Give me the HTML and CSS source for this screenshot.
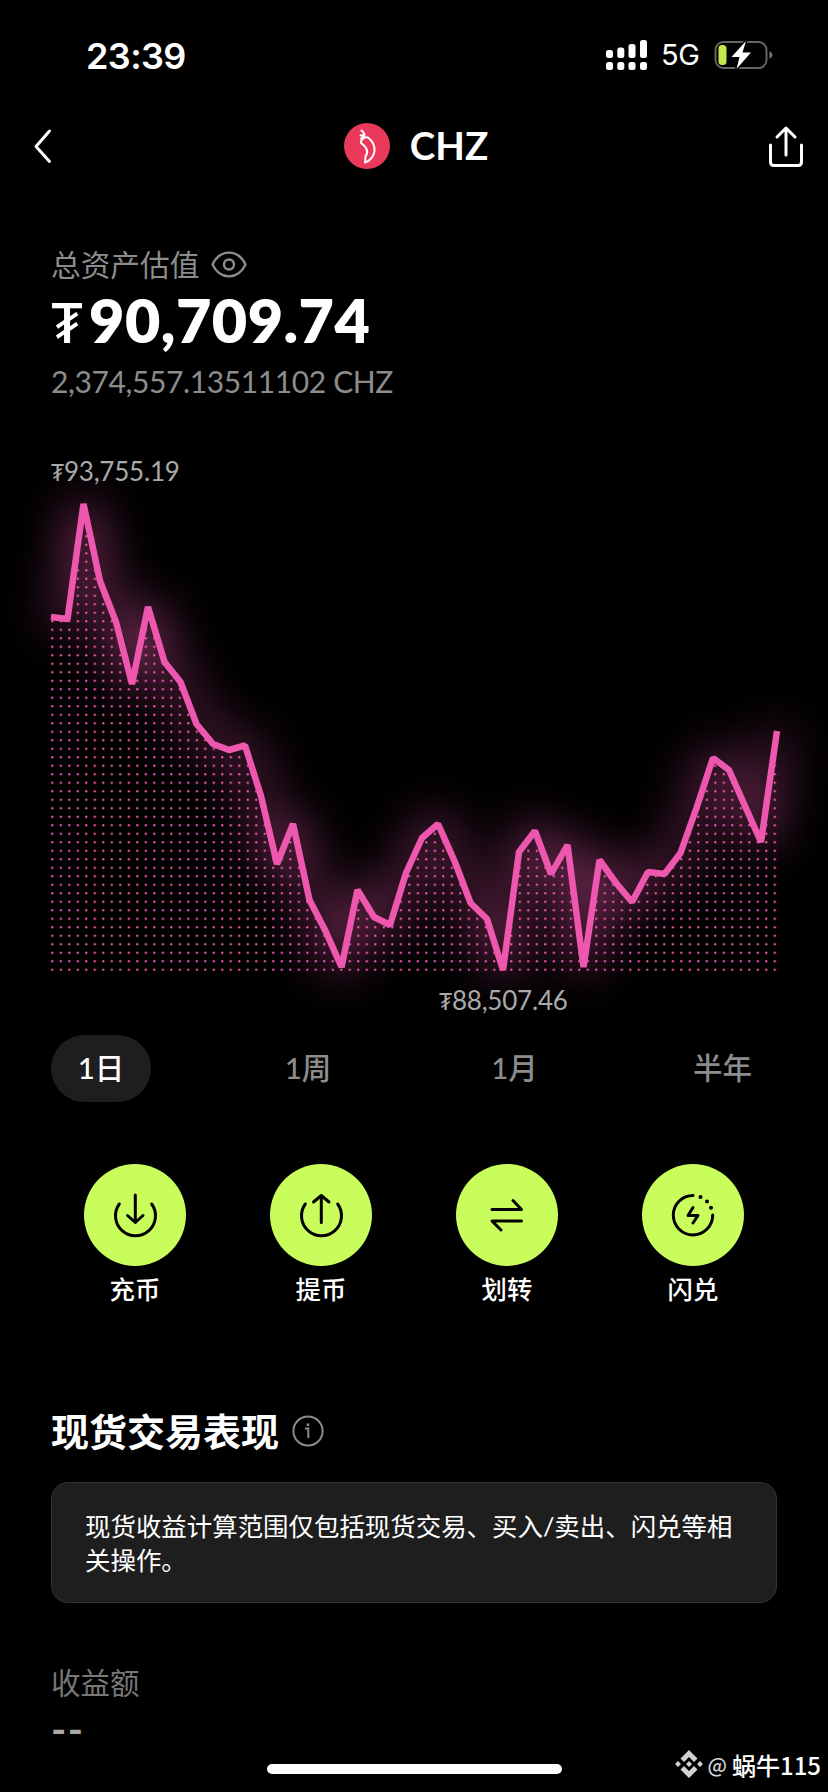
FILE: index.html
```html
<!DOCTYPE html>
<html lang="zh-CN">
<head>
    <meta charset="UTF-8">
    <meta name="viewport" content="width=device-width, initial-scale=1.0">
    <title>CHZ</title>
    <link rel="stylesheet" href="styles.css">
</head>
<body>
    <div class="status-bar">
        <span class="time">23:39</span>
        <div class="status-icons">
            <svg class="signal" width="42" height="30" viewBox="0 0 42 30" fill="#fff">
                <rect x="0" y="10" width="7" height="8" rx="2.5"/>
                <rect x="11.3" y="7.5" width="7" height="10.5" rx="2.5"/>
                <rect x="22.5" y="4" width="7" height="14" rx="2.5"/>
                <rect x="34" y="0" width="7" height="18" rx="2.5"/>
                <rect x="0" y="22" width="7" height="8" rx="2.5"/>
                <rect x="11.3" y="22" width="7" height="8" rx="2.5"/>
                <rect x="22.5" y="22" width="7" height="8" rx="2.5"/>
                <rect x="34" y="22" width="7" height="8" rx="2.5"/>
            </svg>
            <span class="network">5G</span>
            <svg class="battery" width="60" height="30" viewBox="0 0 60 30">
                <rect x="1.5" y="2" width="51" height="26" rx="8" fill="none" stroke="#646464" stroke-width="2"/>
                <path d="M55.5 11 Q58.5 13 58.5 15 Q58.5 17 55.5 19 Z" fill="#777"/>
                <rect x="4.5" y="5" width="8" height="20" rx="3.5" fill="#c3e84e"/>
                <path d="M32 1 L17.5 17 H25.5 L22.5 29 L37 12.5 H28.5 Z" fill="#fff" stroke="#000" stroke-width="3" paint-order="stroke"/>
            </svg>
        </div>
    </div>

    <header class="nav">
        <svg width="20" height="36" viewBox="0 0 20 36" fill="none" stroke="#fff" stroke-width="3" stroke-linecap="round" stroke-linejoin="round">
            <path d="M16.5 3 L3 18.5 L16.5 33.5"/>
        </svg>
        <div class="coin">
            <svg width="46" height="46" viewBox="0 0 46 46">
                <circle cx="23" cy="23" r="23" fill="#ea3a5c"/>
                <g fill="none" stroke="#fff" stroke-width="2" stroke-linecap="round" stroke-linejoin="round">
                    <path d="M17.5 7.5 L19.5 9.5 L20.5 12 M16.5 12.5 L20.5 12 M17 15.5 L20 13.5"/>
                    <path d="M17 18 C19 14.5 22 14 24 14.5 C28.5 18 31 23 30.5 28 C30 33 26 38 21 39.5 L21.5 33.5 C24 30 24 25 17 20 Z"/>
                </g>
            </svg>
            <h1>CHZ</h1>
        </div>
        <svg class="share" width="38" height="42" viewBox="0 0 38 42" fill="none" stroke="#fff" stroke-width="3" stroke-linecap="round" stroke-linejoin="round">
            <path d="M2.5 20 V37 Q2.5 40.5 6 40.5 H30 Q33.5 40.5 33.5 37 V20"/>
            <path d="M18 30 V3 M9 12 L18 3 L27 12"/>
        </svg>
    </header>

    <main>
        <section class="summary">
            <div class="label">
                <span>总资产估值</span>
                <svg width="36" height="28" viewBox="0 0 36 28" fill="none" stroke="#8c8c8c" stroke-width="2.4" stroke-linejoin="round">
                    <path d="M1.5 14.5 C9 -1.3 27 -1.3 34.5 14.5 C27 30.3 9 30.3 1.5 14.5 Z"/>
                    <circle cx="18" cy="14.5" r="5"/>
                </svg>
            </div>
            <p class="total"><span class="sign">₮</span>90,709.74</p>
            <p class="amount">2,374,557.13511102 CHZ</p>
        </section>

        <section class="chart">
            <p class="limit high"><span class="sign">₮</span>93,755.19</p>
            <svg width="828" height="490" viewBox="0 490 828 490">
                <defs>
                    <pattern id="dots" x="51.2" y="968.7" width="8.5" height="8.5" patternUnits="userSpaceOnUse">
                        <rect width="2.2" height="2.2" rx="0.5" fill="#ed57ae"/>
                    </pattern>
                    <filter id="glow" filterUnits="userSpaceOnUse" x="-60" y="400" width="950" height="700" color-interpolation-filters="sRGB">
                        <feGaussianBlur stdDeviation="25"/>
                    </filter>
                    <path id="line" d="M51 617 L67.5 619 L83.5 504 L100 581 L116 622 L132 684 L148 607 L164.5 662 L180.5 682 L196.5 724 L213 744 L229 750 L245 745.5 L261 796 L277 864 L293 824 L309.5 900 L325.5 931 L341.5 967 L357.5 890 L374 917 L390 925 L406 873 L422 838 L438 824 L454.5 861 L470.6 903 L487 919 L503 970 L519 852 L535 831 L551 874 L567.5 845 L583.5 967 L599.5 860 L616 883 L632 902 L648 872 L664.5 874 L680.5 853 L696.5 808 L713 758 L729 770 L745 806 L761 842 L777 731"/>
                </defs>
                <use href="#line" class="glow" filter="url(#glow)"/>
                <path fill="url(#dots)" d="M51 617 L67.5 619 L83.5 504 L100 581 L116 622 L132 684 L148 607 L164.5 662 L180.5 682 L196.5 724 L213 744 L229 750 L245 745.5 L261 796 L277 864 L293 824 L309.5 900 L325.5 931 L341.5 967 L357.5 890 L374 917 L390 925 L406 873 L422 838 L438 824 L454.5 861 L470.6 903 L487 919 L503 970 L519 852 L535 831 L551 874 L567.5 845 L583.5 967 L599.5 860 L616 883 L632 902 L648 872 L664.5 874 L680.5 853 L696.5 808 L713 758 L729 770 L745 806 L761 842 L777 731 V971 H50.5 Z"/>
                <use href="#line" class="stroke"/>
            </svg>
            <p class="limit low"><span class="sign">₮</span>88,507.46</p>
        </section>

        <nav class="tabs">
            <span class="tab active">1日</span>
            <span class="tab">1周</span>
            <span class="tab month">1月</span>
            <span class="tab wide">半年</span>
        </nav>

        <section class="actions">
            <div class="action">
                <svg width="102" height="102" viewBox="0 0 102 102">
                    <path d="M35.3 40 A20 20 0 1 0 67.7 40"/>
                    <path d="M51.3 31 V58.5 M43.5 51.5 L51.3 58.5 L59 51.5"/>
                </svg>
                <span>充币</span>
            </div>
            <div class="action">
                <svg width="102" height="102" viewBox="0 0 102 102">
                    <path d="M35.3 40 A20 20 0 1 0 67.7 40"/>
                    <path d="M51.3 58.5 V31.5 M43.5 38 L51.3 31.5 L59 38"/>
                </svg>
                <span>提币</span>
            </div>
            <div class="action">
                <svg width="102" height="102" viewBox="0 0 102 102">
                    <path d="M36 45.5 H65.5 L57 36.5"/>
                    <path d="M65.5 57 H36 L45 66"/>
                </svg>
                <span>划转</span>
            </div>
            <div class="action">
                <svg width="102" height="102" viewBox="0 0 102 102">
                    <path d="M51 31.5 A19.7 19.7 0 1 0 70.7 51"/>
                    <path d="M51 43.5 L46 51.5 H56 L51 59"/>
                    <path class="spark" d="M58.5 33 h.01 M65 37.5 h.01 M69 43.8 h.01"/>
                </svg>
                <span>闪兑</span>
            </div>
        </section>

        <section class="performance">
            <div class="title">
                <h2>现货交易表现</h2>
                <svg width="32" height="32" viewBox="0 0 32 32" fill="none" stroke="#8c8c8c" stroke-width="2">
                    <circle cx="16" cy="16" r="14.6"/>
                    <path d="M13 13.5 H16.3 V23"/>
                    <path d="M16 8.5 v2.5" stroke-width="2.5"/>
                </svg>
            </div>
            <p class="notice">现货收益计算范围仅包括现货交易、买入/卖出、闪兑等相关操作。</p>
            <p class="profit-label">收益额</p>
            <p class="profit">--</p>
        </section>
    </main>

    <div class="home-indicator"></div>

    <div class="watermark">
        <svg width="28" height="28" viewBox="0 0 28 28" fill="#d2d2d2">
            <path d="M14 0 L22.5 8.5 L19 12 L14 7 L9 12 L5.5 8.5 Z"/>
            <path d="M14 28 L22.5 19.5 L19 16 L14 21 L9 16 L5.5 19.5 Z"/>
            <path d="M14 11 L17 14 L14 17 L11 14 Z M3 11 L6 14 L3 17 L0 14 Z M25 11 L28 14 L25 17 L22 14 Z"/>
        </svg>
        <span class="at">@</span>
        <span>蜗牛115</span>
    </div>
</body>
</html>
```
FILE: styles.css
```css
* {
    box-sizing: border-box;
    padding: 0;
    margin: 0;
}

body {
    position: relative;
    width: 828px;
    height: 1792px;
    overflow: hidden;
    background-color: #000;
    color: #fff;
    font-family: Lato, "Noto Sans CJK SC", sans-serif;
}

svg {
    display: block;
    flex: none;
}

.status-bar {
    height: 111px;
    padding: 0 54px 0 86px;
    display: flex;
    align-items: center;
    justify-content: space-between;
    font-family: Inter, sans-serif;
}

.time {
    font-size: 36px;
    font-weight: 600;
    letter-spacing: -0.6px;
}

.status-icons {
    margin-top: -2px;
    display: flex;
    align-items: center;
}

.network {
    width: 39px;
    margin: 0 14px 0 13px;
    font-size: 29px;
    letter-spacing: -0.5px;
}

.nav {
    height: 70px;
    padding: 0 22px 0 33px;
    display: flex;
    align-items: center;
    justify-content: space-between;
}

.coin {
    margin-left: 11px;
    display: flex;
    align-items: center;
    gap: 20px;
}

.coin h1 {
    padding-bottom: 2px;
    font-size: 38.5px;
    line-height: 46px;
    font-weight: 700;
}

main {
    padding: 63px 51px 0;
}

.label {
    height: 40px;
    display: flex;
    align-items: center;
    gap: 12px;
    font-size: 29.7px;
    color: #8c8c8c;
}

.label span {
    margin-top: -2px;
}

.sign {
    display: inline-block;
    font-family: "Noto Sans", sans-serif;
    font-size: 0.88em;
}

.total {
    height: 75px;
    line-height: 71px;
    font-size: 61px;
    font-weight: 800;
    letter-spacing: 0.5px;
    white-space: nowrap;
}

.total .sign {
    width: 38px;
    font-size: 56px;
    font-weight: 500;
}

.amount {
    height: 44px;
    line-height: 44px;
    font-size: 30px;
    letter-spacing: -0.38px;
    color: #8c8c8c;
}

.chart {
    margin-top: 52px;
}

.chart svg {
    margin-left: -51px;
    overflow: visible;
}

.stroke,
.glow {
    fill: none;
    stroke: #ed57ae;
    stroke-width: 6.5px;
    stroke-linejoin: bevel;
}

.glow {
    stroke-width: 9.5px;
}

.limit {
    position: relative;
    height: 35px;
    line-height: 33px;
    font-size: 26px;
    letter-spacing: -0.2px;
    color: #a9a9a9;
}

.low {
    height: 40px;
    line-height: 40px;
    padding-left: 388px;
}

.tabs {
    margin-top: 15px;
    display: flex;
    justify-content: space-between;
}

.tab {
    width: 100px;
    height: 67px;
    line-height: 65px;
    padding-left: 4px;
    border-radius: 34px;
    text-align: center;
    font-size: 29.5px;
    font-weight: 500;
    color: #8c8c8c;
}

.active {
    padding-left: 0;
    background-color: #1e1e1e;
    color: #fff;
}

.month {
    padding-left: 7px;
}

.wide {
    width: 111px;
    padding-left: 2px;
}

.actions {
    margin-top: 62px;
    padding: 0 33px;
    display: flex;
    justify-content: space-between;
}

.action {
    width: 102px;
    text-align: center;
    font-size: 25.4px;
    line-height: 46px;
    font-weight: 500;
}

.action svg {
    border-radius: 50%;
    background-color: #c9fd5c;
    fill: none;
    stroke: #000;
    stroke-width: 3px;
    stroke-linecap: round;
    stroke-linejoin: round;
}

.action .spark {
    stroke-width: 4px;
}

.performance {
    margin-top: 93px;
}

.title {
    height: 52px;
    display: flex;
    align-items: center;
    gap: 13px;
}

.title h2 {
    font-size: 38px;
    line-height: 52px;
    font-weight: 700;
}

.notice {
    margin-top: 25px;
    height: 121px;
    padding: 26px 33px;
    border: 1px solid #333;
    border-radius: 17px;
    background-color: #1e1e1e;
    font-size: 25.45px;
    line-height: 34px;
}

.profit-label {
    margin-top: 60px;
    font-size: 29.5px;
    line-height: 40px;
    color: #777;
}

.profit {
    font-size: 41px;
    line-height: 52px;
    font-weight: 700;
    letter-spacing: 1.5px;
    color: #a9a9a9;
}

.home-indicator {
    position: absolute;
    left: 267px;
    bottom: 18px;
    width: 295px;
    height: 10px;
    border-radius: 5px;
    background-color: #fff;
}

.watermark {
    position: absolute;
    right: 7px;
    bottom: 10px;
    height: 36px;
    display: flex;
    align-items: center;
    gap: 5px;
    font-family: "Noto Sans CJK SC", sans-serif;
    font-size: 24px;
    font-weight: 500;
}

.at {
    font-size: 20px;
    color: #d2d2d2;
}
```
